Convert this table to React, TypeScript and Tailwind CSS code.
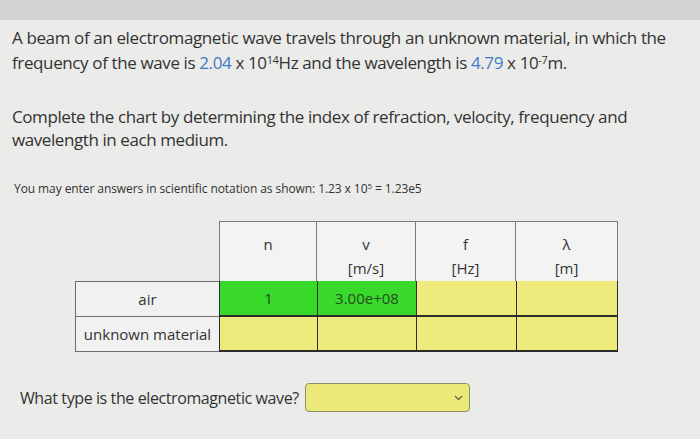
import React from "react";

const cols = [
  { sym: "n", unit: "" },
  { sym: "v", unit: "[m/s]" },
  { sym: "f", unit: "[Hz]" },
  { sym: "λ", unit: "[m]" },
];

const rows = [
  { label: "air", cells: ["1", "3.00e+08", null, null] },
  { label: "unknown material", cells: [null, null, null, null] },
];

const colW = ["w-[98px]", "w-[99px]", "w-[100px]", "w-[102px]"];

export default function App() {
  return (
    <div
      className="w-[700px] h-[439px] bg-[#ebebea] text-[#333] overflow-hidden"
      style={{ fontFamily: '"Open Sans", sans-serif' }}
    >
      <div className="h-[20px] bg-[#d4d4d4]" />

      <div className="pl-[12px] pt-[5px]">
        <p className="text-[17px] leading-[25px] tracking-[-0.38px]">
          A beam of an electromagnetic wave travels through an unknown material, in which the
          <br />
          frequency of the wave is <span className="text-[#3f7ac4]">2.04</span> x 10
          <sup className="text-[11px]">14</sup>Hz and the wavelength is{" "}
          <span className="text-[#3f7ac4]">4.79</span> x 10<sup className="text-[11px]">-7</sup>m.
        </p>

        <p className="mt-[30px] text-[17px] leading-[23px] tracking-[-0.42px]">
          Complete the chart by determining the index of refraction, velocity, frequency and
          <br />
          wavelength in each medium.
        </p>

        <p className="mt-[30px] ml-[2px] text-[12px] leading-[16px] tracking-[-0.08px]">
          You may enter answers in scientific notation as shown: 1.23 x 10
          <sup className="text-[8px]">5</sup> = 1.23e5
        </p>
      </div>

      {/* chart */}
      <div className="mt-[24px] ml-[75px] text-[15px]">
        <div className="flex">
          <div className="w-[144px]" />
          {cols.map((c, i) => (
            <div
              key={c.sym}
              className={`${colW[i]} h-[60px] bg-[#f3f3f3] border-t border-r border-[#7a7a7a] ${
                i === 0 ? "border-l" : ""
              } flex flex-col items-center pt-[10px] leading-[24px]`}
            >
              <span>{c.sym}</span>
              <span>{c.unit}</span>
            </div>
          ))}
        </div>

        {rows.map((r, ri) => (
          <div key={r.label} className="flex">
            <div
              className={`w-[144px] ${ri === 0 ? "h-[36px] border-t" : "h-[35px]"} bg-[#f1f1f1] border-l border-b border-[#6e6e6e] flex items-center justify-center`}
            >
              {r.label}
            </div>
            {r.cells.map((v, ci) => (
              <div
                key={ci}
                className={`${colW[ci]} ${ri === 0 ? "h-[36px]" : "h-[35px]"} border-l-[1.5px] border-b-2 border-[#2c2c2c] ${
                  ci === 3 ? "border-r-[1.5px]" : ""
                } ${
                  v !== null ? "bg-[#38d92a] text-[#2a4a1f]" : "bg-[#eeea7c]"
                } flex items-center justify-center`}
              >
                {v}
              </div>
            ))}
          </div>
        ))}
      </div>

      <div className="mt-[31px] ml-[20px] flex items-center gap-[6px]">
        <span className="text-[16px] tracking-[-0.4px]">What type is the electromagnetic wave?</span>
        <div className="w-[165px] h-[29px] rounded-[4px] border border-[#8d8d6a] bg-[#ebe977] flex items-center justify-end pr-[6px]">
          <svg width="9" height="6" viewBox="0 0 9 6" fill="none">
            <path d="M1 1l3.5 3.5L8 1" stroke="#6b6b4f" strokeWidth="1.4" />
          </svg>
        </div>
      </div>
    </div>
  );
}
